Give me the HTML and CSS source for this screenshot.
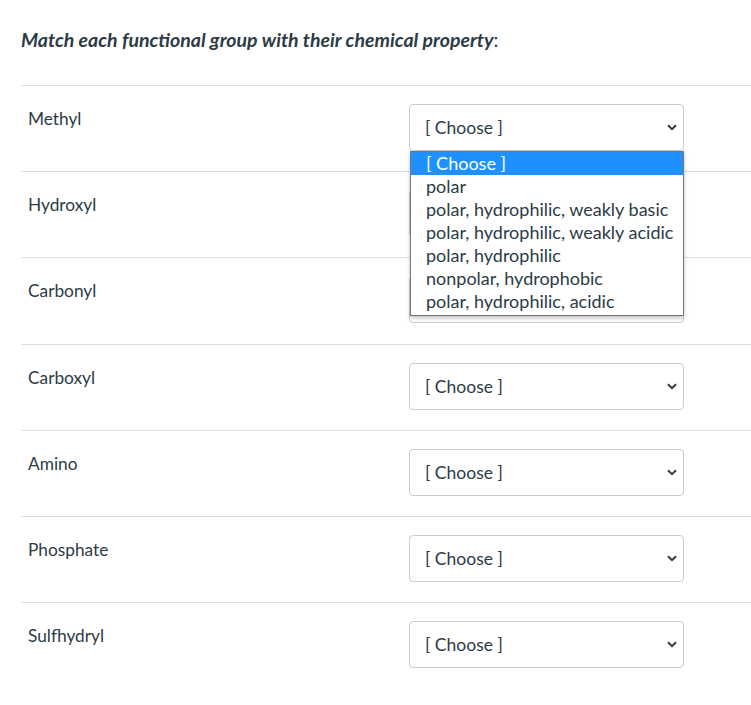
FILE: index.html
```html
<!DOCTYPE html>
<html lang="en">
<head>
    <meta charset="UTF-8">
    <meta name="viewport" content="width=device-width, initial-scale=1.0">
    <title>Match functional groups</title>
    <link rel="stylesheet" href="styles.css">
</head>
<body>

    <div class="question">
        <p class="prompt"><em><strong>Match each functional group with their chemical property</strong></em>:</p>

        <div class="match-row">
            <div class="match-label">Methyl</div>
            <div class="select open">
                <span>[ Choose ]</span>
                <svg class="chevron" width="10" height="7" viewBox="0 0 10 7"><path d="M1 1.2 L5 5.2 L9 1.2" fill="none" stroke="#2d3b45" stroke-width="2"/></svg>
                <!-- open dropdown list -->
                <ul class="options">
                    <li class="selected">[ Choose ]</li>
                    <li>polar</li>
                    <li>polar, hydrophilic, weakly basic</li>
                    <li>polar, hydrophilic, weakly acidic</li>
                    <li>polar, hydrophilic</li>
                    <li>nonpolar, hydrophobic</li>
                    <li>polar, hydrophilic, acidic</li>
                </ul>
            </div>
        </div>

        <div class="match-row">
            <div class="match-label">Hydroxyl</div>
            <div class="select">
                <span>[ Choose ]</span>
                <svg class="chevron" width="10" height="7" viewBox="0 0 10 7"><path d="M1 1.2 L5 5.2 L9 1.2" fill="none" stroke="#2d3b45" stroke-width="2"/></svg>
            </div>
        </div>

        <div class="match-row">
            <div class="match-label">Carbonyl</div>
            <div class="select">
                <span>[ Choose ]</span>
                <svg class="chevron" width="10" height="7" viewBox="0 0 10 7"><path d="M1 1.2 L5 5.2 L9 1.2" fill="none" stroke="#2d3b45" stroke-width="2"/></svg>
            </div>
        </div>

        <div class="match-row">
            <div class="match-label">Carboxyl</div>
            <div class="select">
                <span>[ Choose ]</span>
                <svg class="chevron" width="10" height="7" viewBox="0 0 10 7"><path d="M1 1.2 L5 5.2 L9 1.2" fill="none" stroke="#2d3b45" stroke-width="2"/></svg>
            </div>
        </div>

        <div class="match-row">
            <div class="match-label">Amino</div>
            <div class="select">
                <span>[ Choose ]</span>
                <svg class="chevron" width="10" height="7" viewBox="0 0 10 7"><path d="M1 1.2 L5 5.2 L9 1.2" fill="none" stroke="#2d3b45" stroke-width="2"/></svg>
            </div>
        </div>

        <div class="match-row">
            <div class="match-label">Phosphate</div>
            <div class="select">
                <span>[ Choose ]</span>
                <svg class="chevron" width="10" height="7" viewBox="0 0 10 7"><path d="M1 1.2 L5 5.2 L9 1.2" fill="none" stroke="#2d3b45" stroke-width="2"/></svg>
            </div>
        </div>

        <div class="match-row">
            <div class="match-label">Sulfhydryl</div>
            <div class="select">
                <span>[ Choose ]</span>
                <svg class="chevron" width="10" height="7" viewBox="0 0 10 7"><path d="M1 1.2 L5 5.2 L9 1.2" fill="none" stroke="#2d3b45" stroke-width="2"/></svg>
            </div>
        </div>
    </div>

</body>
</html>
```

FILE: styles.css
```css
/* CSS styles */
body {
    font-family: Lato, "Open Sans", sans-serif;
    margin: 0;
    padding: 0;
    background-color: #fff;
    color: #2d3b45;
}
.question {
    padding: 0 0 40px 21px;
}
.prompt {
    margin: 0;
    padding-top: 28px;
    height: 85px;
    box-sizing: border-box;
    font-size: 19.5px;
    line-height: 24px;
}
.match-row {
    display: flex;
    height: 86.2px;
    box-sizing: border-box;
    border-top: 1px solid #dddddd;
    padding-left: 7px;
}
.match-label {
    width: 381px;
    padding-top: 21px;
    font-size: 17.3px;
    line-height: 24px;
}
.select {
    position: relative;
    margin-top: 18px;
    width: 275px;
    height: 47px;
    box-sizing: border-box;
    border: 1px solid #c7cdd1;
    border-radius: 4px;
    background-color: #fff;
    display: flex;
    align-items: center;
    justify-content: space-between;
    padding: 0 6px 0 15px;
    font-size: 17.5px;
}
.chevron {
    display: block;
}
.options {
    position: absolute;
    top: 46px;
    left: 0;
    width: 274px;
    box-sizing: border-box;
    margin: 0;
    padding: 0 0 2px;
    list-style: none;
    background-color: #fff;
    border: 1px solid #767676;
    box-shadow: 0 2px 4px rgba(0, 0, 0, 0.25);
    z-index: 10;
}
.options li {
    height: 23px;
    line-height: 23px;
    padding-left: 15px;
    font-size: 18px;
    white-space: nowrap;
}
.options li.selected {
    background-color: #1e90ff;
    color: #fff;
}
```
